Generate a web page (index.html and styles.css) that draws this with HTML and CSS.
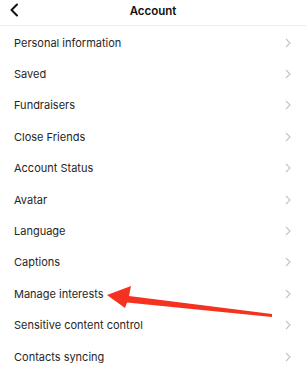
FILE: index.html
```html
<!DOCTYPE html>
<html>
<head>
<meta charset="utf-8">
<link rel="stylesheet" href="styles.css">
</head>
<body>
<div class="screen">
  <div class="header">
    <svg class="back" width="10" height="14" viewBox="0 0 10 14"><path d="M8 1.5 L2.5 7 L8 12.5" fill="none" stroke="#111" stroke-width="2" stroke-linecap="round" stroke-linejoin="round"/></svg>
    <div class="title">Account</div>
  </div>
  <ul class="list">
    <li class="row"><span>Personal information</span><svg class="chev" width="6" height="10" viewBox="0 0 6 10"><path d="M1 1 L5 5 L1 9" fill="none" stroke="#c4c4c4" stroke-width="1.1"/></svg></li>
    <li class="row"><span>Saved</span><svg class="chev" width="6" height="10" viewBox="0 0 6 10"><path d="M1 1 L5 5 L1 9" fill="none" stroke="#c4c4c4" stroke-width="1.1"/></svg></li>
    <li class="row"><span>Fundraisers</span><svg class="chev" width="6" height="10" viewBox="0 0 6 10"><path d="M1 1 L5 5 L1 9" fill="none" stroke="#c4c4c4" stroke-width="1.1"/></svg></li>
    <li class="row"><span>Close Friends</span><svg class="chev" width="6" height="10" viewBox="0 0 6 10"><path d="M1 1 L5 5 L1 9" fill="none" stroke="#c4c4c4" stroke-width="1.1"/></svg></li>
    <li class="row"><span>Account Status</span><svg class="chev" width="6" height="10" viewBox="0 0 6 10"><path d="M1 1 L5 5 L1 9" fill="none" stroke="#c4c4c4" stroke-width="1.1"/></svg></li>
    <li class="row"><span>Avatar</span><svg class="chev" width="6" height="10" viewBox="0 0 6 10"><path d="M1 1 L5 5 L1 9" fill="none" stroke="#c4c4c4" stroke-width="1.1"/></svg></li>
    <li class="row"><span>Language</span><svg class="chev" width="6" height="10" viewBox="0 0 6 10"><path d="M1 1 L5 5 L1 9" fill="none" stroke="#c4c4c4" stroke-width="1.1"/></svg></li>
    <li class="row"><span>Captions</span><svg class="chev" width="6" height="10" viewBox="0 0 6 10"><path d="M1 1 L5 5 L1 9" fill="none" stroke="#c4c4c4" stroke-width="1.1"/></svg></li>
    <li class="row"><span>Manage interests</span><svg class="chev" width="6" height="10" viewBox="0 0 6 10"><path d="M1 1 L5 5 L1 9" fill="none" stroke="#c4c4c4" stroke-width="1.1"/></svg></li>
    <li class="row"><span>Sensitive content control</span><svg class="chev" width="6" height="10" viewBox="0 0 6 10"><path d="M1 1 L5 5 L1 9" fill="none" stroke="#c4c4c4" stroke-width="1.1"/></svg></li>
    <li class="row"><span>Contacts syncing</span><svg class="chev" width="6" height="10" viewBox="0 0 6 10"><path d="M1 1 L5 5 L1 9" fill="none" stroke="#c4c4c4" stroke-width="1.1"/></svg></li>
  </ul>
  <svg class="arrow" width="306" height="367" viewBox="0 0 306 367"><polygon points="107,295 131,286 129,296 272,314 272,317 127,302.5 125,308" fill="#f5321f"/></svg>
</div>
</body>
</html>
```
FILE: styles.css
```css
html, body {
  margin: 0;
  padding: 0;
  background: #fff;
}
.screen {
  position: relative;
  width: 306px;
  height: 367px;
  overflow: hidden;
  font-family: Inter, "Liberation Sans", sans-serif;
  color: #262626;
}
.header {
  height: 25px;
  border-bottom: 1px solid #ececec;
  display: flex;
  align-items: center;
  justify-content: center;
  position: relative;
}
.back {
  position: absolute;
  left: 9px;
  top: 3px;
}
.title {
  font-size: 11.5px;
  font-weight: 600;
  color: #111;
  margin-top: -4px;
}
.list {
  list-style: none;
  margin: 0;
  padding: 1px 0 0;
}
.row {
  height: 31.4px;
  display: flex;
  align-items: center;
  justify-content: space-between;
  padding: 0 15px 0 14px;
  font-size: 11px;
}
.chev {
  display: block;
}
.arrow {
  position: absolute;
  left: 0;
  top: 0;
}
```
